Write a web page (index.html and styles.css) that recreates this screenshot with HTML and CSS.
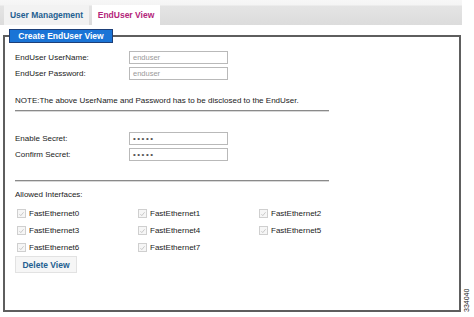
FILE: index.html
```html
<!DOCTYPE html>
<html>
<head>
<meta charset="utf-8">
<link rel="stylesheet" href="styles.css">
</head>
<body>
<div class="page">
  <div class="tabbar">
    <div class="tab">User Management</div>
    <div class="tab active">EndUser View</div>
  </div>
  <fieldset class="frame">
    <legend class="legend">Create EndUser View</legend>
    <div class="content">
      <div class="row first">
        <span class="label">EndUser UserName:</span>
        <span class="input">enduser</span>
      </div>
      <div class="row">
        <span class="label">EndUser Password:</span>
        <span class="input">enduser</span>
      </div>
      <p class="note">NOTE:The above UserName and Password has to be disclosed to the EndUser.</p>
      <div class="rule"></div>
      <div class="row secret-first">
        <span class="label">Enable Secret:</span>
        <span class="input dots">&#8226;&#8226;&#8226;&#8226;&#8226;</span>
      </div>
      <div class="row">
        <span class="label">Confirm Secret:</span>
        <span class="input dots">&#8226;&#8226;&#8226;&#8226;&#8226;</span>
      </div>
      <div class="rule second"></div>
      <p class="allowed">Allowed Interfaces:</p>
      <div class="ifaces">
        <label class="iface"><span class="cb"><svg viewBox="0 0 10 10" width="8" height="8"><path d="M2 5.2 L4 7.3 L8 2.5" fill="none" stroke="#b4b4b4" stroke-width="1"/></svg></span>FastEthernet0</label>
        <label class="iface"><span class="cb"><svg viewBox="0 0 10 10" width="8" height="8"><path d="M2 5.2 L4 7.3 L8 2.5" fill="none" stroke="#b4b4b4" stroke-width="1"/></svg></span>FastEthernet1</label>
        <label class="iface"><span class="cb"><svg viewBox="0 0 10 10" width="8" height="8"><path d="M2 5.2 L4 7.3 L8 2.5" fill="none" stroke="#b4b4b4" stroke-width="1"/></svg></span>FastEthernet2</label>
        <label class="iface"><span class="cb"><svg viewBox="0 0 10 10" width="8" height="8"><path d="M2 5.2 L4 7.3 L8 2.5" fill="none" stroke="#b4b4b4" stroke-width="1"/></svg></span>FastEthernet3</label>
        <label class="iface"><span class="cb"><svg viewBox="0 0 10 10" width="8" height="8"><path d="M2 5.2 L4 7.3 L8 2.5" fill="none" stroke="#b4b4b4" stroke-width="1"/></svg></span>FastEthernet4</label>
        <label class="iface"><span class="cb"><svg viewBox="0 0 10 10" width="8" height="8"><path d="M2 5.2 L4 7.3 L8 2.5" fill="none" stroke="#b4b4b4" stroke-width="1"/></svg></span>FastEthernet5</label>
        <label class="iface"><span class="cb"><svg viewBox="0 0 10 10" width="8" height="8"><path d="M2 5.2 L4 7.3 L8 2.5" fill="none" stroke="#b4b4b4" stroke-width="1"/></svg></span>FastEthernet6</label>
        <label class="iface"><span class="cb"><svg viewBox="0 0 10 10" width="8" height="8"><path d="M2 5.2 L4 7.3 L8 2.5" fill="none" stroke="#b4b4b4" stroke-width="1"/></svg></span>FastEthernet7</label>
      </div>
      <div class="btn">Delete View</div>
    </div>
  </fieldset>
  <div class="figno">334040</div>
</div>
</body>
</html>
```
FILE: styles.css
```css
html, body {
  margin: 0;
  padding: 0;
  background: #ffffff;
}
body {
  font-family: "Liberation Sans", Arial, sans-serif;
  font-size: 8px;
  color: #1a1a1a;
}
.page {
  position: relative;
  width: 474px;
  height: 317px;
  overflow: hidden;
}
.tabbar {
  width: 462px;
  height: 25px;
  box-sizing: border-box;
  padding: 5px 0 0 4px;
  display: flex;
  gap: 3px;
  align-items: flex-end;
  background: linear-gradient(#f7f7f7 0px, #f4f4f4 5px, #e4e4e4 6px, #dcdcdc 25px);
}
.tab {
  height: 20px;
  box-sizing: border-box;
  padding: 0;
  display: flex;
  align-items: center;
  justify-content: center;
  white-space: nowrap;
  font-weight: bold;
  font-size: 8.5px;
  color: #245f91;
  background: #f2f2f2;
}
.tab:first-child {
  width: 85px;
}
.tab.active {
  width: 68px;
  background: #ffffff;
  color: #b3247a;
}
.frame {
  margin: 4px 0 0 3px;
  width: 458px;
  height: 283px;
  box-sizing: border-box;
  padding: 0;
  border: 2px solid #5e5e5e;
}
.legend {
  margin-left: 4px;
  padding: 0;
  width: 104px;
  height: 14px;
  box-sizing: border-box;
  background: #1a74d6;
  border: 1px solid #1d3f78;
  color: #ffffff;
  font-weight: bold;
  font-size: 8.5px;
  white-space: nowrap;
  display: flex;
  align-items: center;
  justify-content: center;
}
.content {
  padding: 6px 0 0 10px;
}
.row {
  display: flex;
  align-items: center;
  height: 16px;
}
.label {
  width: 114px;
}
.input {
  width: 99px;
  height: 13px;
  box-sizing: border-box;
  border: 1px solid #b9b9b9;
  color: #9a9a9a;
  padding-left: 3px;
  display: flex;
  align-items: center;
  font-size: 7.5px;
}
.input.dots {
  color: #555555;
  font-size: 8px;
  letter-spacing: 1.5px;
}
.note {
  margin: 15px 0 0 0;
  height: 10px;
  line-height: 10px;
}
.rule {
  margin-top: 4px;
  width: 314px;
  height: 1px;
  background: #8a8a8a;
  border-bottom: 1px solid #d8d8d8;
}
.secret-first {
  margin-top: 18px;
}
.rule.second {
  margin-top: 18px;
}
.allowed {
  margin: 8px 0 0 0;
  height: 10px;
  line-height: 10px;
}
.ifaces {
  margin-top: 5px;
  display: grid;
  grid-template-columns: 121px 121px 121px;
  grid-auto-rows: 17px;
  padding-left: 2px;
}
.iface {
  display: flex;
  align-items: center;
  gap: 3px;
}
.cb {
  width: 9px;
  height: 9px;
  box-sizing: border-box;
  border: 1px solid #cfcfcf;
  background: #f6f6f6;
  display: flex;
  align-items: center;
  justify-content: center;
}
.btn {
  margin-top: 0;
  width: 62px;
  height: 17px;
  box-sizing: border-box;
  border: 1px solid #e2e2e2;
  background: #f6f6f6;
  color: #245f91;
  font-weight: bold;
  font-size: 8.5px;
  display: flex;
  align-items: center;
  justify-content: center;
}
.figno {
  position: absolute;
  left: 463px;
  top: 286px;
  width: 8px;
  height: 26px;
  font-size: 7px;
  color: #222;
  writing-mode: vertical-rl;
  transform: rotate(180deg);
  line-height: 8px;
}
```
